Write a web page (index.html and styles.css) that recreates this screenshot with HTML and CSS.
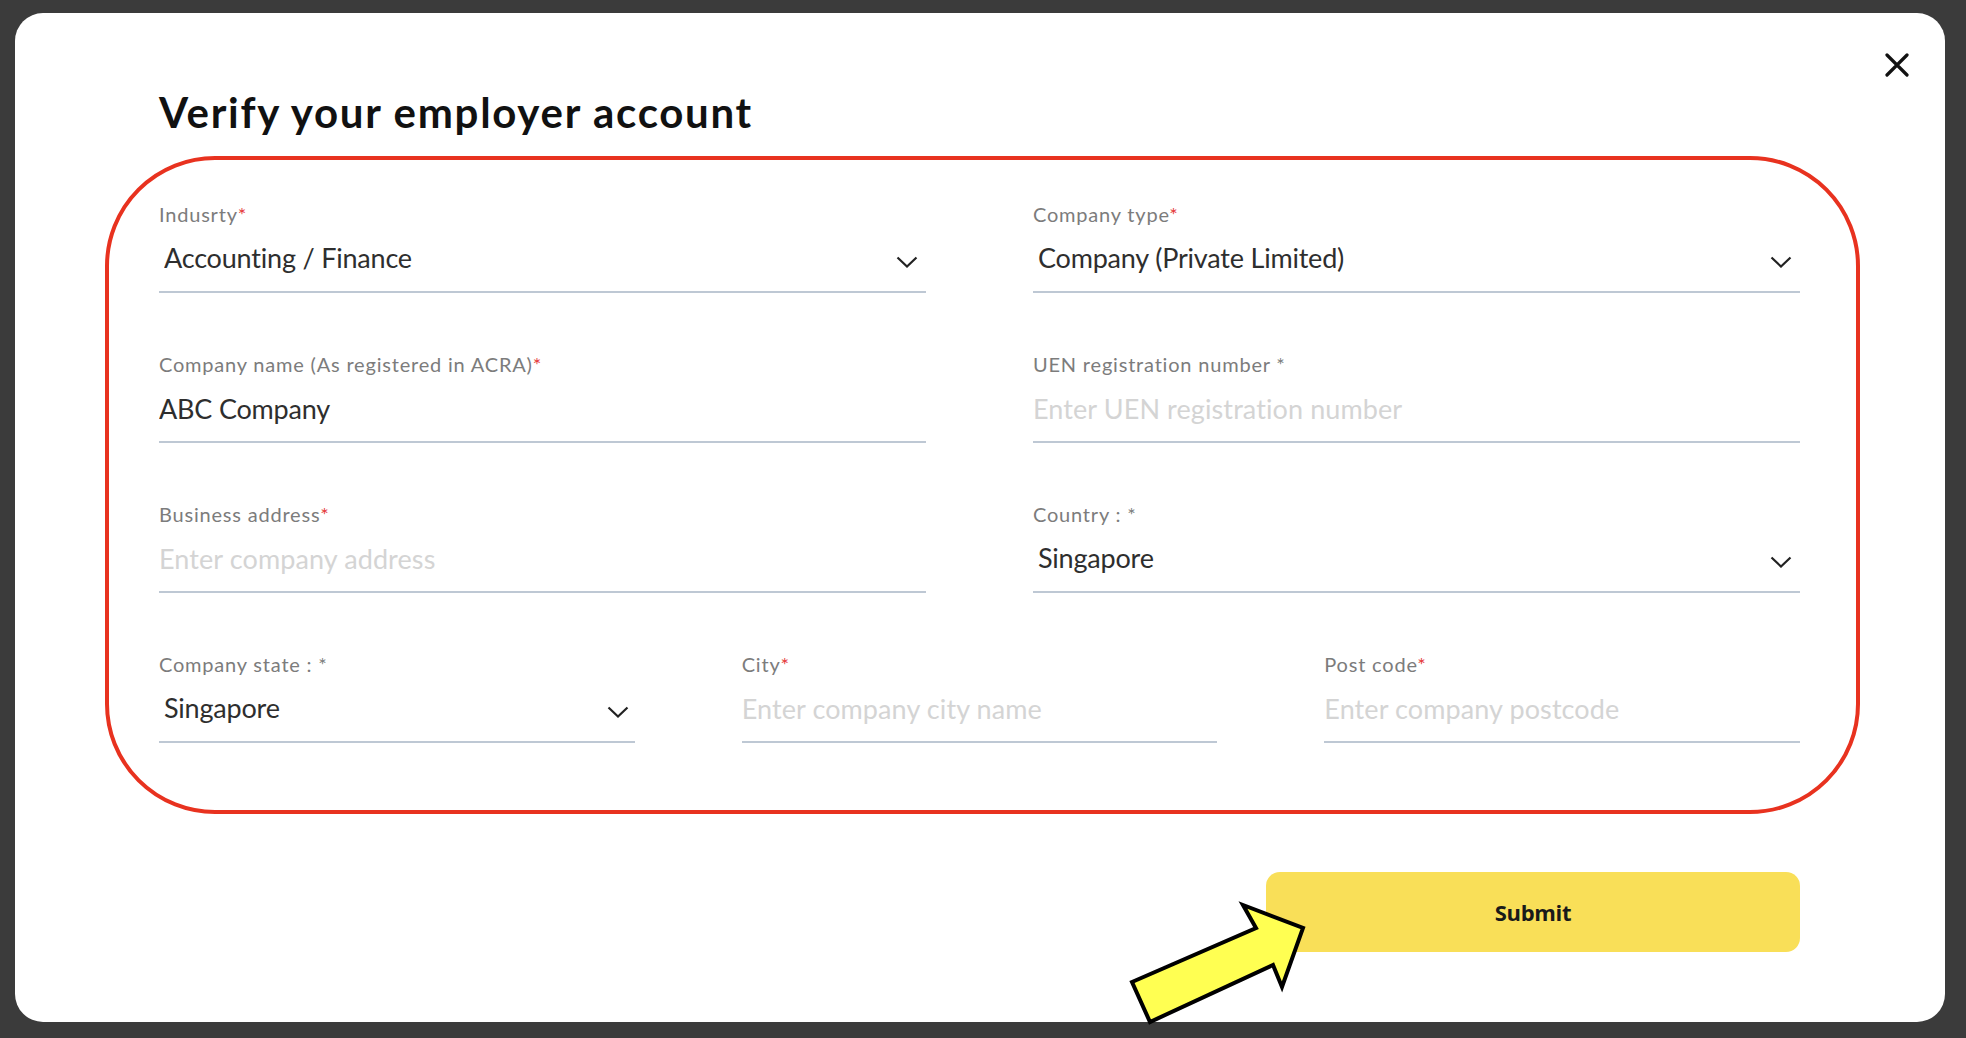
FILE: index.html
```html
<!DOCTYPE html>
<html lang="en">
<head>
<meta charset="utf-8">
<title>Verify your employer account</title>
<link rel="stylesheet" href="styles.css">
</head>
<body>
<div class="modal">
  <button class="close" aria-label="Close">
    <svg width="24" height="24" viewBox="0 0 24 24"><path d="M2 2 L22 22 M22 2 L2 22" stroke="#111" stroke-width="3.2" stroke-linecap="round" fill="none"/></svg>
  </button>
  <h1 class="title">Verify your employer account</h1>

  <form class="form">
    <div class="row row-2">
      <div class="field">
        <label class="label">Indusrty<span class="req">*</span></label>
        <div class="select-wrap">
          <select class="control select"><option>Accounting / Finance</option></select>
          <svg class="chev" width="22" height="12" viewBox="0 0 22 12"><path d="M1.5 1.5 L11 10.5 L20.5 1.5" stroke="#222" stroke-width="2.2" fill="none"/></svg>
        </div>
      </div>
      <div class="field">
        <label class="label">Company type<span class="req">*</span></label>
        <div class="select-wrap">
          <select class="control select"><option>Company (Private Limited)</option></select>
          <svg class="chev" width="22" height="12" viewBox="0 0 22 12"><path d="M1.5 1.5 L11 10.5 L20.5 1.5" stroke="#222" stroke-width="2.2" fill="none"/></svg>
        </div>
      </div>
    </div>

    <div class="row row-2">
      <div class="field">
        <label class="label">Company name (As registered in ACRA)<span class="req">*</span></label>
        <input class="control" type="text" value="ABC Company">
      </div>
      <div class="field">
        <label class="label">UEN registration number *</label>
        <input class="control" type="text" placeholder="Enter UEN registration number">
      </div>
    </div>

    <div class="row row-2">
      <div class="field">
        <label class="label">Business address<span class="req">*</span></label>
        <input class="control" type="text" placeholder="Enter company address">
      </div>
      <div class="field">
        <label class="label">Country : *</label>
        <div class="select-wrap">
          <select class="control select"><option>Singapore</option></select>
          <svg class="chev" width="22" height="12" viewBox="0 0 22 12"><path d="M1.5 1.5 L11 10.5 L20.5 1.5" stroke="#222" stroke-width="2.2" fill="none"/></svg>
        </div>
      </div>
    </div>

    <div class="row row-3">
      <div class="field">
        <label class="label">Company state : *</label>
        <div class="select-wrap">
          <select class="control select"><option>Singapore</option></select>
          <svg class="chev chev-sm" width="22" height="12" viewBox="0 0 22 12"><path d="M1.5 1.5 L11 10.5 L20.5 1.5" stroke="#222" stroke-width="2.2" fill="none"/></svg>
        </div>
      </div>
      <div class="field">
        <label class="label">City<span class="req">*</span></label>
        <input class="control" type="text" placeholder="Enter company city name">
      </div>
      <div class="field">
        <label class="label">Post code<span class="req">*</span></label>
        <input class="control" type="text" placeholder="Enter company postcode">
      </div>
    </div>
  </form>

  <div class="actions">
    <button class="submit" type="button">Submit</button>
  </div>

  <div class="highlight"></div>
  <svg class="pointer" width="200" height="140" viewBox="0 0 200 140">
    <polygon points="12,87 136,33 123,10 183,33 162,92 153,70 30,127" fill="#ffff52" stroke="#000" stroke-width="4" stroke-linejoin="miter"/>
  </svg>
</div>
</body>
</html>
```

FILE: styles.css
```css
html, body {
  margin: 0;
  height: 100%;
}

body {
  background: #3b3b3b;
  padding: 13px 21px 16px 15px;
  box-sizing: border-box;
  overflow: hidden;
  font-family: "Lato", "Noto Sans", sans-serif;
}

.modal {
  position: relative;
  background: #ffffff;
  border-radius: 28px;
  height: 1009px;
  box-sizing: border-box;
  padding: 74px 130px 0 144px;
}

.close {
  position: absolute;
  top: 40px;
  right: 36px;
  width: 24px;
  height: 24px;
  padding: 0;
  border: 0;
  background: transparent;
  display: flex;
}

.title {
  margin: 0;
  font-size: 42px;
  line-height: 50px;
  font-weight: 700;
  color: #111111;
  letter-spacing: 1.7px;
}

.form {
  margin-top: 65px;
  width: 1641px;
  display: flex;
  flex-direction: column;
  gap: 59px;
}

.row {
  display: grid;
  column-gap: 107px;
}

.row-2 {
  grid-template-columns: 1fr 1fr;
}

.row-3 {
  grid-template-columns: 1fr 1fr 1fr;
}

.field {
  display: flex;
  flex-direction: column;
  gap: 8px;
}

.label {
  font-size: 20px;
  line-height: 24px;
  color: #7c7c7c;
  letter-spacing: 0.8px;
}

.req {
  color: #e5393a;
}

.select-wrap {
  position: relative;
}

.control {
  display: block;
  width: 100%;
  box-sizing: border-box;
  height: 59px;
  padding: 8px 0 17px 0;
  margin: 0;
  border: 0;
  border-bottom: 2px solid #bec8d4;
  border-radius: 0;
  outline: none;
  background: transparent;
  font-family: "Lato", "Noto Sans", sans-serif;
  font-size: 27px;
  line-height: 32px;
  color: #2e2e2e;
  letter-spacing: -0.2px;
}

.control::placeholder {
  color: #d4d4d4;
  letter-spacing: 0.1px;
}

.select {
  -webkit-appearance: none;
  appearance: none;
  padding-left: 5px;
  padding-right: 48px;
}

.chev {
  position: absolute;
  right: 8px;
  top: 22px;
  pointer-events: none;
}

.chev-sm {
  right: 6px;
}

.actions {
  display: flex;
  justify-content: flex-end;
  width: 1641px;
  margin-top: 129px;
}

.submit {
  width: 534px;
  height: 80px;
  border: 0;
  border-radius: 14px;
  background: #f9df58;
  font-family: "Open Sans", "Lato", sans-serif;
  font-size: 22px;
  font-weight: 700;
  color: #1a1a1a;
  letter-spacing: -0.3px;
  padding: 0;
}

.highlight {
  position: absolute;
  left: 90px;
  top: 143px;
  width: 1755px;
  height: 658px;
  box-sizing: border-box;
  border: 4px solid #e8321f;
  border-radius: 110px;
  pointer-events: none;
}

.pointer {
  position: absolute;
  left: 1105px;
  top: 882px;
}
```
